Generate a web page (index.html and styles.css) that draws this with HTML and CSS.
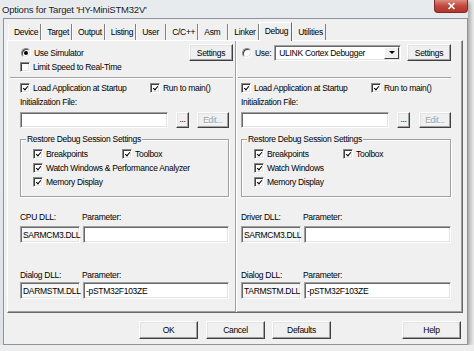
FILE: index.html
```html
<!DOCTYPE html>
<html>
<head>
  <title>Options for Target 'HY-MiniSTM32V'</title>
  <link rel="stylesheet" href="styles.css">
</head>
<body>
  <div class="window">
    <div class="titlebar">
      <span class="title">Options for Target 'HY-MiniSTM32V'</span>
      <div class="close">
        <svg width="9" height="8" viewBox="0 0 9 8"><path d="M1.5 1L7.5 7M7.5 1L1.5 7" stroke="#fff" stroke-width="1.7"/></svg>
      </div>
    </div>
    <div class="client">
      <div class="tabs">
        <span class="tab">Device</span>
        <span class="tab">Target</span>
        <span class="tab">Output</span>
        <span class="tab">Listing</span>
        <span class="tab">User</span>
        <span class="tab">C/C++</span>
        <span class="tab">Asm</span>
        <span class="tab">Linker</span>
        <span class="tab active">Debug</span>
        <span class="tab">Utilities</span>
      </div>
      <div class="panel">
        <!-- simulator side -->
        <div class="col">
          <div class="row top">
            <span class="check"><span class="radio on"></span>Use Simulator</span>
            <span class="btn settings">Settings</span>
          </div>
          <div class="row"><span class="check"><span class="box"></span>Limit Speed to Real-Time</span></div>
          <div class="sep"></div>
          <div class="row pair load">
            <span class="check"><span class="box on"></span>Load Application at Startup</span>
            <span class="check"><span class="box on"></span>Run to main()</span>
          </div>
          <div class="row label">Initialization File:</div>
          <div class="file-row">
            <span class="field"></span>
            <span class="btn dots">...</span>
            <span class="btn edit">Edit...</span>
          </div>
          <fieldset class="group">
            <legend>Restore Debug Session Settings</legend>
            <div class="row pair">
              <span class="check"><span class="box on"></span>Breakpoints</span>
              <span class="check"><span class="box on"></span>Toolbox</span>
            </div>
            <div class="row"><span class="check"><span class="box on"></span>Watch Windows &amp; Performance Analyzer</span></div>
            <div class="row"><span class="check"><span class="box on"></span>Memory Display</span></div>
          </fieldset>
          <div class="row dll-label"><span>CPU DLL:</span><span>Parameter:</span></div>
          <div class="dll-row">
            <span class="field dll">SARMCM3.DLL</span>
            <span class="field param"></span>
          </div>
          <div class="row dll-label dialog"><span>Dialog DLL:</span><span>Parameter:</span></div>
          <div class="dll-row">
            <span class="field dll">DARMSTM.DLL</span>
            <span class="field param">-pSTM32F103ZE</span>
          </div>
        </div>
        <!-- target driver side -->
        <div class="col">
          <div class="row top">
            <span class="check"><span class="radio"></span>Use:</span>
            <span class="combo"><span class="combo-text">ULINK Cortex Debugger</span><span class="arrow"></span></span>
            <span class="btn settings">Settings</span>
          </div>
          <div class="row"></div>
          <div class="sep"></div>
          <div class="row pair load">
            <span class="check"><span class="box on"></span>Load Application at Startup</span>
            <span class="check"><span class="box on"></span>Run to main()</span>
          </div>
          <div class="row label">Initialization File:</div>
          <div class="file-row">
            <span class="field"></span>
            <span class="btn dots">...</span>
            <span class="btn edit">Edit...</span>
          </div>
          <fieldset class="group">
            <legend>Restore Debug Session Settings</legend>
            <div class="row pair">
              <span class="check"><span class="box on"></span>Breakpoints</span>
              <span class="check"><span class="box on"></span>Toolbox</span>
            </div>
            <div class="row"><span class="check"><span class="box on"></span>Watch Windows</span></div>
            <div class="row"><span class="check"><span class="box on"></span>Memory Display</span></div>
          </fieldset>
          <div class="row dll-label"><span>Driver DLL:</span><span>Parameter:</span></div>
          <div class="dll-row">
            <span class="field dll">SARMCM3.DLL</span>
            <span class="field param"></span>
          </div>
          <div class="row dll-label dialog"><span>Dialog DLL:</span><span>Parameter:</span></div>
          <div class="dll-row">
            <span class="field dll">TARMSTM.DLL</span>
            <span class="field param">-pSTM32F103ZE</span>
          </div>
        </div>
      </div>
      <div class="actions">
        <span class="btn">OK</span>
        <span class="btn cancel">Cancel</span>
        <span class="btn defaults">Defaults</span>
        <span class="btn help">Help</span>
      </div>
    </div>
  </div>
</body>
</html>
```

FILE: styles.css
```css
body {
  margin: 0;
  background: #ededed;
  font-family: "Liberation Sans", Arial, sans-serif;
  font-size: 8.5px;
  letter-spacing: -0.3px;
  color: #000;
}

.window {
  width: 468px;
  background: linear-gradient(#e8ebee, #dfe3e7);
  box-shadow: 2px 2px 5px rgba(0, 0, 0, 0.35);
}

.titlebar {
  height: 18px;
  display: flex;
  align-items: center;
  padding-left: 2px;
}

.title {
  font-size: 9.5px;
  letter-spacing: -0.2px;
  color: #1a1a1a;
  text-shadow: 0 0 4px #fff;
}

.close {
  margin-left: auto;
  align-self: flex-start;
  width: 34px;
  height: 13px;
  box-sizing: border-box;
  display: flex;
  align-items: center;
  justify-content: center;
  background: linear-gradient(#dd8a80, #c2473c 50%, #b3342a);
  border: 1px solid #7e2a22;
  border-top: none;
  border-radius: 0 0 4px 4px;
}

.client {
  margin-left: 3px;
  width: 463px;
  border: 1px solid #8e949b;
  background: #f0f0f0;
  padding: 5px 0 5px;
}

/* tab strip */
.tabs {
  display: flex;
  align-items: flex-end;
  height: 16px;
  margin-left: 4px;
}

.tab {
  height: 16px;
  box-sizing: border-box;
  min-width: 30px;
  padding: 0 2px 0 5px;
  line-height: 17px;
  border-left: 1px solid #fafafa;
  border-right: 1px solid #808080;
}

.tab.active {
  position: relative;
  z-index: 1;
  height: 19px;
  margin-bottom: -1px;
  padding: 0 3px 0 5px;
  line-height: 16px;
  background: #f0f0f0;
  border-top: 1px solid #fff;
  border-left-color: #fff;
  border-right-color: #696969;
}

.panel {
  display: flex;
  width: 456px;
  margin-left: 3px;
  box-sizing: border-box;
  border: 1px solid;
  border-color: #fff #696969 #696969 #fff;
  box-shadow: inset -1px -1px #a0a0a0;
}

.col {
  width: 227px;
  box-sizing: border-box;
  padding: 3px 6px 13px 12px;
}

.col + .col {
  border-left: 1px solid #a0a0a0;
  box-shadow: inset 1px 0 #fff;
  padding: 3px 11px 13px 5px;
}

.row {
  display: flex;
  align-items: center;
  height: 12px;
  white-space: nowrap;
}

.row.top {
  height: 17px;
}

.sep {
  margin: 4px -4px 0 -10px;
  border-top: 1px solid #a0a0a0;
  border-bottom: 1px solid #fff;
}

.col + .col .sep {
  margin: 4px 0 0 -3px;
}

.row.load {
  margin-top: 3px;
}

.row.label {
  margin-top: 2px;
}

.pair > :first-child {
  width: 130px;
}

.check {
  display: flex;
  align-items: center;
}

/* classic sunken checkbox and radio */
.box,
.radio {
  width: 10px;
  height: 10px;
  box-sizing: border-box;
  margin-right: 3px;
  display: flex;
  align-items: center;
  justify-content: center;
  background: #fff;
  border: 1px solid;
  border-color: #8a8a8a #fff #fff #8a8a8a;
  box-shadow: inset 1px 1px #404040, inset -1px -1px #e3e3e3;
}

.radio {
  border-radius: 50%;
  margin-left: 1px;
}

.box.on::after {
  content: "";
  width: 2px;
  height: 4px;
  margin-top: -2px;
  border: solid #000;
  border-width: 0 1.6px 1.6px 0;
  transform: rotate(40deg);
}

.radio.on::after {
  content: "";
  width: 4px;
  height: 4px;
  border-radius: 50%;
  background: #000;
}

/* raised button */
.btn {
  height: 17px;
  box-sizing: border-box;
  display: flex;
  align-items: center;
  justify-content: center;
  background: #f0f0f0;
  border: 1px solid;
  border-color: #fff #404040 #404040 #fff;
  box-shadow: inset -1px -1px #a0a0a0, inset 1px 1px #e3e3e3;
}

.settings {
  width: 44px;
  margin-left: auto;
  margin-right: -4px;
}

.col + .col .settings {
  margin-right: 0;
}

.field {
  height: 16px;
  box-sizing: border-box;
  display: flex;
  align-items: center;
  padding-left: 2px;
  background: #fff;
  border: 1px solid;
  border-color: #a0a0a0 #fff #fff #a0a0a0;
  box-shadow: inset 1px 1px #696969, inset -1px -1px #e3e3e3;
  white-space: nowrap;
}

.file-row {
  display: flex;
  margin-top: 4px;
}

.file-row .field {
  width: 148px;
}

.dots {
  width: 13px;
  height: 16px;
  margin-left: 8px;
  padding-bottom: 2px;
}

.edit {
  width: 32px;
  height: 16px;
  margin-left: auto;
  color: #a0a0a0;
  text-shadow: 1px 1px #fff;
}

/* group box */
.group {
  margin: 5px 0 0;
  padding: 2px 0 7px 5px;
  border: 1px solid #a0a0a0;
  box-shadow: 1px 1px #fff, inset 1px 1px #fff;
}

.group legend {
  padding: 0 1px;
  line-height: 12px;
  background: #f0f0f0;
}

.group .row {
  height: 14px;
  margin-left: 7px;
}

.group .pair > :first-child {
  width: 89px;
}

.dll-label {
  margin-top: 14px;
}

.dll-label.dialog {
  margin-top: 26px;
}

.dll-label > :first-child {
  width: 62px;
}

.dll-row {
  display: flex;
  margin-top: 3px;
}

.dll-label.dialog + .dll-row {
  margin-top: 1px;
}

.dll-row .field {
  height: 17px;
}

.dll {
  width: 60px;
  background: #f7f7f7;
}

.param {
  flex: 1;
  margin-left: 3px;
}

/* debugger combo */
.combo {
  width: 127px;
  height: 16px;
  box-sizing: border-box;
  margin-left: 3px;
  display: flex;
  align-items: center;
  background: #fff;
  border: 1px solid;
  border-color: #a0a0a0 #fff #fff #a0a0a0;
  box-shadow: inset 1px 1px #696969, inset -1px -1px #e3e3e3;
}

.combo-text {
  flex: 1;
  padding-left: 4px;
  white-space: nowrap;
}

.arrow {
  width: 15px;
  height: 12px;
  margin-right: 1px;
  box-sizing: border-box;
  display: flex;
  align-items: center;
  justify-content: center;
  background: #f0f0f0;
  border: 1px solid;
  border-color: #fff #404040 #404040 #fff;
}

.arrow::after {
  content: "";
  border: 3px solid transparent;
  border-top: 3px solid #000;
  margin-top: 3px;
}

/* bottom buttons */
.actions {
  display: flex;
  margin-top: 8px;
  padding: 0 6px 0 135px;
}

.actions .btn {
  width: 59px;
  height: 18px;
}

.actions .cancel {
  margin-left: 8px;
}

.actions .defaults {
  margin-left: 7px;
}

.actions .help {
  margin-left: auto;
}
```
